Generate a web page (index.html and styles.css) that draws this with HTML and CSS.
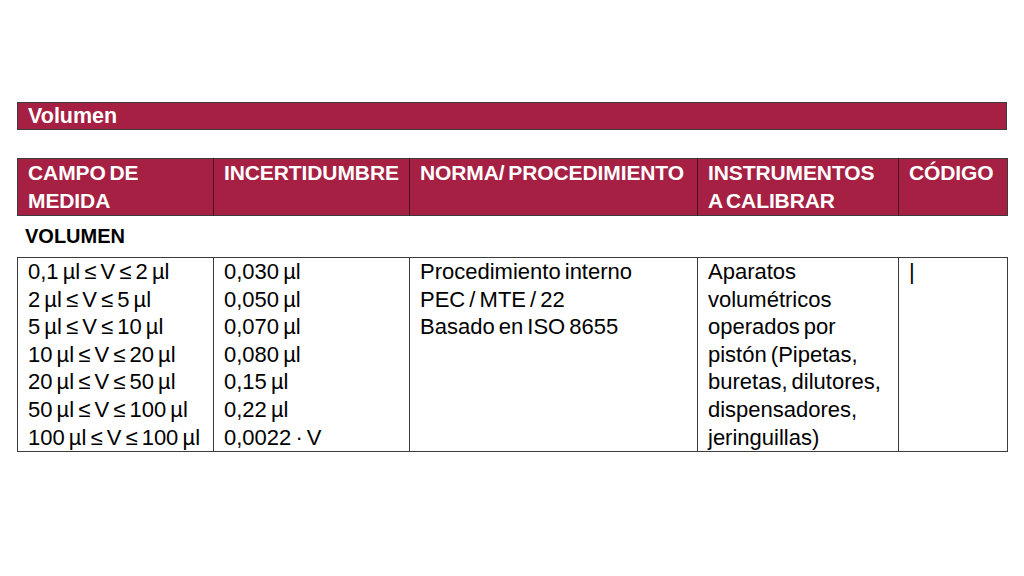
FILE: index.html
```html
<!DOCTYPE html>
<html lang="es">
<head>
<meta charset="utf-8">
<title>Volumen</title>
<link rel="stylesheet" href="styles.css">
</head>
<body>
<main class="page">
  <div class="title-bar">Volumen</div>
  <table class="grid head">
    <colgroup>
      <col class="c1"><col class="c2"><col class="c3"><col class="c4"><col class="c5">
    </colgroup>
    <tr>
      <th>CAMPO DE<br>MEDIDA</th>
      <th>INCERTIDUMBRE</th>
      <th>NORMA/ PROCEDIMIENTO</th>
      <th>INSTRUMENTOS<br>A CALIBRAR</th>
      <th>CÓDIGO</th>
    </tr>
  </table>
  <div class="section-label">VOLUMEN</div>
  <table class="grid body">
    <colgroup>
      <col class="c1"><col class="c2"><col class="c3"><col class="c4"><col class="c5">
    </colgroup>
    <tr>
      <td>0,1 µl ≤ V ≤ 2 µl<br>2 µl ≤ V ≤ 5 µl<br>5 µl ≤ V ≤ 10 µl<br>10 µl ≤ V ≤ 20 µl<br>20 µl ≤ V ≤ 50 µl<br>50 µl ≤ V ≤ 100 µl<br>100 µl ≤ V ≤ 100 µl</td>
      <td>0,030 µl<br>0,050 µl<br>0,070 µl<br>0,080 µl<br>0,15 µl<br>0,22 µl<br>0,0022 · V</td>
      <td>Procedimiento interno<br>PEC / MTE / 22<br>Basado en ISO 8655</td>
      <td>Aparatos<br>volumétricos<br>operados por<br>pistón (Pipetas,<br>buretas, dilutores,<br>dispensadores,<br>jeringuillas)</td>
      <td>|</td>
    </tr>
  </table>
</main>
</body>
</html>
```
FILE: styles.css
```css
html, body {
  margin: 0;
  padding: 0;
  background: #ffffff;
}
body {
  font-family: "Liberation Sans", Arial, sans-serif;
  width: 1024px;
  height: 576px;
  overflow: hidden;
}
.page {
  padding: 102px 0 0 17px;
  width: 990px;
}
.title-bar {
  box-sizing: border-box;
  height: 28px;
  background: #a52043;
  border: 1px solid #3c3c3c;
  color: #ffffff;
  font-weight: bold;
  font-size: 21.5px;
  line-height: 26px;
  padding-left: 10px;
}
.grid {
  border-collapse: collapse;
  table-layout: fixed;
  width: 990px;
}
.c1 { width: 196px; }
.c2 { width: 196px; }
.c3 { width: 288px; }
.c4 { width: 201px; }
.c5 { width: 109px; }
.head {
  margin-top: 28px;
  background: #a52043;
  border: 1px solid #3c3c3c;
}
.head th {
  border-left: 1px solid #4a0f22;
  color: #ffffff;
  font-size: 21px;
  font-weight: bold;
  text-align: left;
  vertical-align: top;
  line-height: 28px;
  padding: 0 2px 0 10px;
  height: 56px;
  white-space: nowrap;
  letter-spacing: -0.1px;
  word-spacing: -2px;
}
.head th:first-child { border-left: none; }
.section-label {
  font-weight: bold;
  font-size: 20px;
  line-height: 41px;
  height: 41px;
  padding-left: 8px;
  color: #000;
}
.body {
  border: 1px solid #3c3c3c;
}
.body td {
  border-left: 1px solid #3c3c3c;
  font-size: 22px;
  line-height: 27.6px;
  vertical-align: top;
  padding: 0 2px 0 10px;
  white-space: nowrap;
  word-spacing: -2px;
  color: #000;
}
.body td:first-child { border-left: none; }
```
